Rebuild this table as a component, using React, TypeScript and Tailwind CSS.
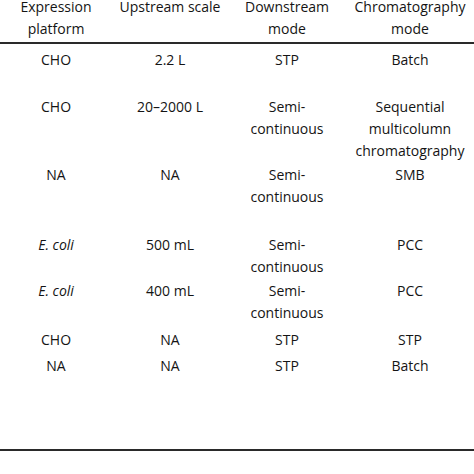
const rows: { h: number; cells: (string | JSX.Element)[][] }[] = [
  { h: 47, cells: [["CHO"], ["2.2 L"], ["STP"], ["Batch"]] },
  { h: 68, cells: [["CHO"], ["20–2000 L"], ["Semi-", "continuous"], ["Sequential", "multicolumn", "chromatography"]] },
  { h: 70, cells: [["NA"], ["NA"], ["Semi-", "continuous"], ["SMB"]] },
  { h: 46, cells: [[<i key="e">E. coli</i>], ["500 mL"], ["Semi-", "continuous"], ["PCC"]] },
  { h: 49, cells: [[<i key="e">E. coli</i>], ["400 mL"], ["Semi-", "continuous"], ["PCC"]] },
  { h: 26, cells: [["CHO"], ["NA"], ["STP"], ["STP"]] },
  { h: 26, cells: [["NA"], ["NA"], ["STP"], ["Batch"]] },
];

const header = [
  ["Expression", "platform"],
  ["Upstream scale"],
  ["Downstream", "mode"],
  ["Chromatography", "mode"],
];

const cols = "grid grid-cols-[112px_116px_118px_128px]";

export default function App() {
  return (
    <div
      className="w-[474px] h-[474px] overflow-hidden bg-white text-[#141414] text-[14px] leading-[22px]"
      style={{ fontFamily: '"Open Sans", sans-serif' }}
    >
      <div className={`${cols} -mt-[4px] h-[46px]`}>
        {header.map((lines, i) => (
          <div key={i} className="text-center">
            {lines.map((l) => (
              <div key={l}>{l}</div>
            ))}
          </div>
        ))}
      </div>
      <div className="h-[2px] bg-[#2a2a2a]" />
      <div className="h-[5px]" />
      {rows.map((r, ri) => (
        <div key={ri} className={cols} style={{ height: r.h }}>
          {r.cells.map((lines, ci) => (
            <div key={ci} className="text-center">
              {lines.map((l, li) => (
                <div key={li}>{l}</div>
              ))}
            </div>
          ))}
        </div>
      ))}
      <div className="h-[68px]" />
      <div className="h-[2px] bg-[#2a2a2a]" />
    </div>
  );
}
